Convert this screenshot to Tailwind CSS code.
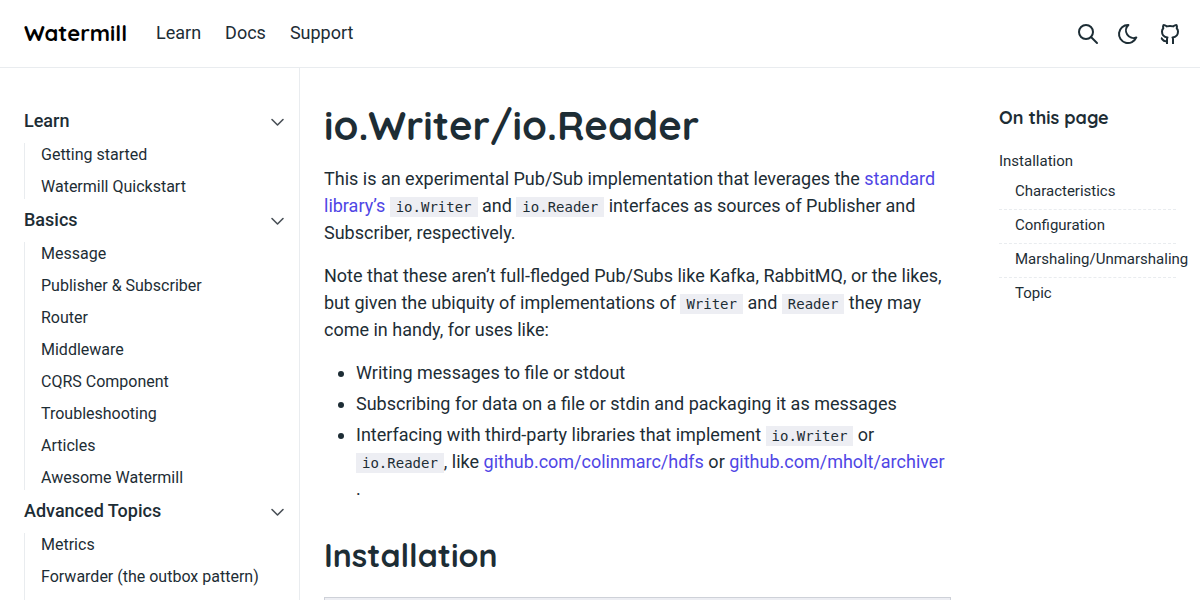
<!DOCTYPE html>
<html lang="en">
<head>
<meta charset="utf-8">
<meta name="viewport" content="width=device-width, initial-scale=1">
<title>io.Writer/io.Reader - Watermill</title>
<script src="https://cdn.jsdelivr.net/npm/@tailwindcss/browser@4"></script>
</head>
<body class="flex h-screen flex-col overflow-hidden bg-white font-['Roboto',sans-serif] text-[#1d2d35]">
<header class="flex h-17 shrink-0 items-center justify-between border-b border-[#e9ecef] pr-[18px] pl-6">
  <div class="flex items-center pb-0.5">
    <a href="#" class="w-33 font-['Quicksand','Lato',sans-serif] text-[22px] leading-7 font-bold text-black">Watermill</a>
    <nav class="flex gap-6 text-lg leading-7" aria-label="Main">
      <a href="#">Learn</a>
      <a href="#">Docs</a>
      <a href="#">Support</a>
    </nav>
  </div>
  <div class="flex items-center gap-4">
    <button type="button" aria-label="Search" class="size-6"><svg class="size-6" viewBox="0 0 24 24" fill="none" stroke="currentColor" stroke-width="2" stroke-linecap="round" stroke-linejoin="round"><circle cx="10" cy="10" r="7"/><path d="M21 21l-6-6"/></svg></button>
    <button type="button" aria-label="Toggle theme" class="size-6"><svg class="size-6" viewBox="0 0 24 24" fill="none" stroke="currentColor" stroke-width="2" stroke-linecap="round" stroke-linejoin="round"><path d="M12 3c.132 0 .263 0 .393 0a7.5 7.5 0 0 0 7.92 12.446a9 9 0 1 1 -8.313 -12.454z"/></svg></button>
    <a href="#" aria-label="GitHub" class="ml-0.5 size-6"><svg class="size-6" viewBox="0 0 24 24" fill="none" stroke="currentColor" stroke-width="2" stroke-linejoin="round"><path d="M9 19c-4.3 1.4 -4.3 -2.5 -6 -3m12 6v-4.500c0 -1 .1 -1.400 -.5 -2c2.800 -.3 5.500 -1.400 5.500 -6a4.600 4.600 0 0 0 -1.300 -3.200a4.200 4.200 0 0 0 -.1 -3.200s-1.100 -.3 -3.500 1.300a12.300 12.300 0 0 0 -6.200 0c-2.400 -1.600 -3.500 -1.300 -3.500 -1.300a4.200 4.200 0 0 0 -.1 3.200a4.600 4.600 0 0 0 -1.300 3.200c0 4.600 2.700 5.700 5.500 6c-.6 .6 -.6 1.200 -.5 2v4.500"/></svg></a>
  </div>
</header>
<div class="flex min-h-0 flex-1">
  <aside class="w-75 shrink-0 overflow-hidden border-r border-[#e9ecef] pt-8 pr-3 pl-6">
    <nav aria-label="Docs" class="text-base">
      <section>
        <button type="button" class="flex h-[43px] w-full items-center justify-between pb-0.5 text-lg font-medium">Learn<svg class="size-5 text-[#495057]" viewBox="0 0 20 20" fill="none" stroke="currentColor" stroke-width="1.6" stroke-linecap="round" stroke-linejoin="round"><path d="M5 8.500l5.500 5.500 5.500-5.500"/></svg></button>
        <ul class="flex flex-col gap-2 border-l border-[#e9ecef] pl-4">
          <li><a href="#">Getting started</a></li>
          <li><a href="#">Watermill Quickstart</a></li>
        </ul>
      </section>
      <section>
        <button type="button" class="flex h-[43px] w-full items-center justify-between pb-0.5 text-lg font-medium">Basics<svg class="size-5 text-[#495057]" viewBox="0 0 20 20" fill="none" stroke="currentColor" stroke-width="1.6" stroke-linecap="round" stroke-linejoin="round"><path d="M5 8.500l5.500 5.500 5.500-5.500"/></svg></button>
        <ul class="flex flex-col gap-2 border-l border-[#e9ecef] pl-4">
          <li><a href="#">Message</a></li>
          <li><a href="#">Publisher &amp; Subscriber</a></li>
          <li><a href="#">Router</a></li>
          <li><a href="#">Middleware</a></li>
          <li><a href="#">CQRS Component</a></li>
          <li><a href="#">Troubleshooting</a></li>
          <li><a href="#">Articles</a></li>
          <li><a href="#">Awesome Watermill</a></li>
        </ul>
      </section>
      <section>
        <button type="button" class="flex h-[43px] w-full items-center justify-between pb-0.5 text-lg font-medium">Advanced Topics<svg class="size-5 text-[#495057]" viewBox="0 0 20 20" fill="none" stroke="currentColor" stroke-width="1.6" stroke-linecap="round" stroke-linejoin="round"><path d="M5 8.500l5.500 5.500 5.500-5.500"/></svg></button>
        <ul class="flex flex-col gap-2 border-l border-[#e9ecef] pb-8 pl-4">
          <li><a href="#">Metrics</a></li>
          <li><a href="#">Forwarder (the outbox pattern)</a></li>
        </ul>
      </section>
    </nav>
  </aside>
  <main class="min-w-0 flex-1 overflow-hidden pt-8 pr-12 pl-6 text-lg leading-[27px]">
    <h1 class="mb-[15px] font-['Quicksand','Lato',sans-serif] text-[40px] leading-[50px] font-bold">io.Writer/io.Reader</h1>
    <p class="mb-4">This is an experimental Pub/Sub implementation that leverages the <a href="#" class="text-[#4f46e5]">standard library’s</a> <code class="bg-[#edeef3] px-1.5 py-0.5 font-['DejaVu_Sans_Mono',monospace] text-sm">io.Writer</code> and <code class="bg-[#edeef3] px-1.5 py-0.5 font-['DejaVu_Sans_Mono',monospace] text-sm">io.Reader</code> interfaces as sources of Publisher and Subscriber, respectively.</p>
    <p class="mb-4">Note that these aren’t full-fledged Pub/Subs like Kafka, RabbitMQ, or the likes, but given the ubiquity of implementations of <code class="bg-[#edeef3] px-1.5 py-0.5 font-['DejaVu_Sans_Mono',monospace] text-sm">Writer</code> and <code class="bg-[#edeef3] px-1.5 py-0.5 font-['DejaVu_Sans_Mono',monospace] text-sm">Reader</code> they may come in handy, for uses like:</p>
    <ul class="flex list-disc flex-col gap-1 pl-8">
      <li>Writing messages to file or stdout</li>
      <li>Subscribing for data on a file or stdin and packaging it as messages</li>
      <li>Interfacing with third-party libraries that implement <code class="bg-[#edeef3] px-1.5 py-0.5 font-['DejaVu_Sans_Mono',monospace] text-sm">io.Writer</code> or <code class="bg-[#edeef3] px-1.5 py-0.5 font-['DejaVu_Sans_Mono',monospace] text-sm">io.Reader</code>, like <a href="#" class="text-[#4f46e5]">github.com/colinmarc/hdfs</a> or <a href="#" class="text-[#4f46e5]">github.com/mholt/archiver</a> .</li>
    </ul>
    <h2 class="mt-[33px] mb-[22px] font-['Quicksand','Lato',sans-serif] text-[32px] leading-10 font-bold">Installation</h2>
    <pre class="h-16 border border-[#ced1d8] bg-[#edeef3]"></pre>
  </main>
  <aside class="w-[201px] shrink-0 pt-9 pr-6 text-[15px] leading-[22px]">
    <h3 class="font-['Quicksand','Lato',sans-serif] text-lg leading-7 font-bold">On this page</h3>
    <nav aria-label="On this page" class="mt-[18px]">
      <a href="#">Installation</a>
      <ul class="mt-1">
        <li class="border-b border-dashed border-[#e9ecef] pt-1 pb-[7px] pl-4"><a href="#">Characteristics</a></li>
        <li class="border-b border-dashed border-[#e9ecef] pt-1 pb-[7px] pl-4"><a href="#">Configuration</a></li>
        <li class="border-b border-dashed border-[#e9ecef] pt-1 pb-[7px] pl-4"><a href="#">Marshaling/Unmarshaling</a></li>
        <li class="pt-1 pb-[7px] pl-4"><a href="#">Topic</a></li>
      </ul>
    </nav>
  </aside>
</div>
</body>
</html>
